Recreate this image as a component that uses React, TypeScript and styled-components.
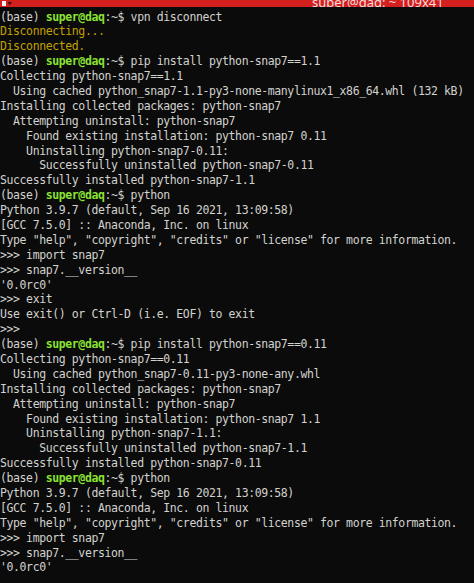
import React from "react";
import styled, { createGlobalStyle } from "styled-components";

const GlobalStyle = createGlobalStyle`
  html, body {
    margin: 0;
    padding: 0;
    background: #0b0b0b;
    overflow: hidden;
  }
`;

const Window = styled.div`
  width: 474px;
  height: 583px;
  background: #0b0b0b;
  display: flex;
  flex-direction: column;
  overflow: hidden;
`;

const TitleBar = styled.div`
  height: 7px;
  flex: none;
  background: #d41f1f;
  display: flex;
  align-items: flex-end;
  overflow: hidden;
`;

const MenuIcon = styled.svg`
  flex: none;
  align-self: flex-start;
  margin-left: 2px;
  margin-top: 1px;
`;

const Title = styled.span`
  margin-left: 299px;
  margin-bottom: -2px;
  font-family: "Noto Sans", "Open Sans", sans-serif;
  font-size: 13px;
  line-height: 13px;
  color: #f4dede;
  white-space: pre;
`;

const Screen = styled.div`
  padding-top: 2.5px;
  display: flex;
  flex-direction: column;
  font-family: "DejaVu Sans Mono", "Liberation Mono", monospace;
  font-size: 11.5px;
  letter-spacing: -0.393px;
  color: #d2d2cf;
`;

const Line = styled.div`
  height: 14.9px;
  line-height: 14.9px;
  white-space: pre;
`;

const Seg = styled.span<{ $kind?: "user" | "warn" | "plain" }>`
  color: ${(p) =>
    p.$kind === "user" ? "#8ae234" : p.$kind === "warn" ? "#c4a000" : "inherit"};
  font-weight: ${(p) => (p.$kind === "user" ? 700 : 400)};
`;

type SegT = { t: string; k?: "user" | "warn" | "plain" };

const prompt = (cmd: string): SegT[] => [
  { t: "(base) " },
  { t: "super@daq", k: "user" },
  { t: ":~$ " + cmd },
];

const lines: SegT[][] = [
  prompt("vpn disconnect"),
  [{ t: "Disconnecting...", k: "warn" }],
  [{ t: "Disconnected.", k: "warn" }],
  prompt("pip install python-snap7==1.1"),
  [{ t: "Collecting python-snap7==1.1" }],
  [{ t: "  Using cached python_snap7-1.1-py3-none-manylinux1_x86_64.whl (132 kB)" }],
  [{ t: "Installing collected packages: python-snap7" }],
  [{ t: "  Attempting uninstall: python-snap7" }],
  [{ t: "    Found existing installation: python-snap7 0.11" }],
  [{ t: "    Uninstalling python-snap7-0.11:" }],
  [{ t: "      Successfully uninstalled python-snap7-0.11" }],
  [{ t: "Successfully installed python-snap7-1.1" }],
  prompt("python"),
  [{ t: "Python 3.9.7 (default, Sep 16 2021, 13:09:58)" }],
  [{ t: "[GCC 7.5.0] :: Anaconda, Inc. on linux" }],
  [{ t: 'Type "help", "copyright", "credits" or "license" for more information.' }],
  [{ t: ">>> import snap7" }],
  [{ t: ">>> snap7.__version__" }],
  [{ t: "'0.0rc0'" }],
  [{ t: ">>> exit" }],
  [{ t: "Use exit() or Ctrl-D (i.e. EOF) to exit" }],
  [{ t: ">>>" }],
  prompt("pip install python-snap7==0.11"),
  [{ t: "Collecting python-snap7==0.11" }],
  [{ t: "  Using cached python_snap7-0.11-py3-none-any.whl" }],
  [{ t: "Installing collected packages: python-snap7" }],
  [{ t: "  Attempting uninstall: python-snap7" }],
  [{ t: "    Found existing installation: python-snap7 1.1" }],
  [{ t: "    Uninstalling python-snap7-1.1:" }],
  [{ t: "      Successfully uninstalled python-snap7-1.1" }],
  [{ t: "Successfully installed python-snap7-0.11" }],
  prompt("python"),
  [{ t: "Python 3.9.7 (default, Sep 16 2021, 13:09:58)" }],
  [{ t: "[GCC 7.5.0] :: Anaconda, Inc. on linux" }],
  [{ t: 'Type "help", "copyright", "credits" or "license" for more information.' }],
  [{ t: ">>> import snap7" }],
  [{ t: ">>> snap7.__version__" }],
  [{ t: "'0.0rc0'" }],
];

export default function App() {
  return (
    <>
      <GlobalStyle />
      <Window>
        <TitleBar>
          <MenuIcon width="11" height="6" viewBox="0 0 11 6">
            <rect x="0" y="0" width="4" height="5" fill="#f2f2f2" />
            <path d="M5.5 1 L10 1 L7.75 4.5 Z" fill="#3a1010" />
          </MenuIcon>
          <Title>super@daq: ~ 109x41</Title>
        </TitleBar>
        <Screen>
          {lines.map((segs, i) => (
            <Line key={i}>
              {segs.map((s, j) => (
                <Seg key={j} $kind={s.k}>
                  {s.t}
                </Seg>
              ))}
            </Line>
          ))}
        </Screen>
      </Window>
    </>
  );
}
